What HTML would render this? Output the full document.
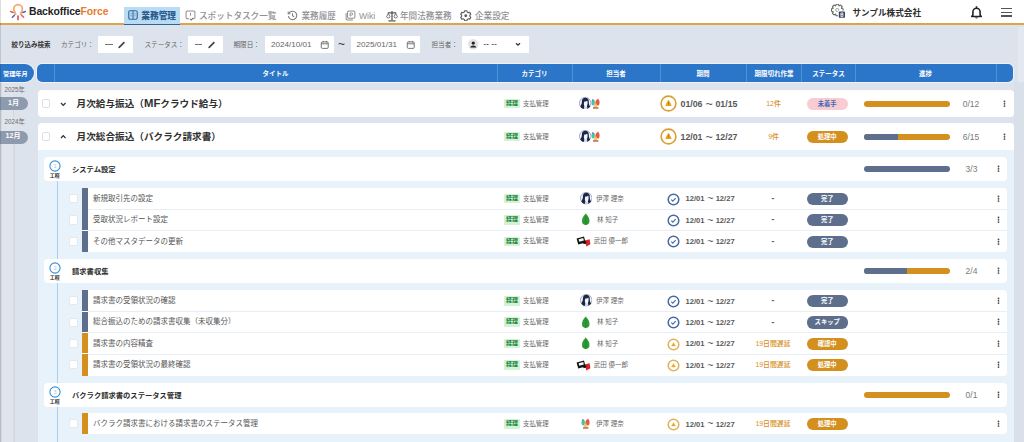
<!DOCTYPE html>
<html lang="ja"><head><meta charset="utf-8"><title>BackofficeForce</title><style>
*{box-sizing:border-box;margin:0;padding:0}
html,body{width:1024px;height:442px;overflow:hidden;background:#dde3ec;font-family:"Liberation Sans", "Noto Sans CJK JP", sans-serif;color:#333}
.a{position:absolute}
.t{position:absolute;white-space:nowrap;line-height:1;transform:translateY(-50%)}
.c{transform:translate(-50%,-50%)}
.b{font-weight:bold}
#hdr{left:0;top:0;width:1024px;height:25.3px;background:#fff;border-bottom:2px solid #dfa349}
.nav{font-size:8.6px;color:#8f8f94;font-weight:500}
.flt{font-size:6.6px;color:#666}
.inp{background:#fff;height:17px;top:36px;border-radius:1px}
.th{font-size:6.5px;color:#fff;font-weight:bold}
.sep{width:1px;top:63.500px;height:18.800px;background:#4f90db}
.card{background:#fff;border-radius:4px}
.cb{width:8.6px;height:8.6px;border:1px solid #dde0e5;border-radius:2px;background:#fff}
.cbs{width:9.2px;height:9.2px;border:1px solid #e6e8ec;border-radius:2px;background:#fff}
.badge{background:#d2f3d5;color:#23843a;font-size:6px;font-weight:bold;height:9.5px;width:16px;text-align:center;line-height:9.5px;border-radius:1px}
.cat{font-size:6.4px;color:#666}
.pill{width:41.2px;height:12.2px;border-radius:6.1px;color:#fff;font-size:6.3px;font-weight:bold;text-align:center;line-height:12.2px}
.bar{height:6px;border-radius:3px;overflow:hidden;background:#d4901f}
.bar i{display:block;height:6px;background:#5d6f8c}
.cnt{font-size:8.5px;color:#7a7a7a}
.nm{font-size:6.5px;color:#666}
.dt{font-size:7.6px;color:#585858;font-weight:bold}
.dt1{font-size:8.8px;color:#585858;font-weight:bold}
.dt1 u{text-decoration:none;font-size:12.5px;line-height:0;margin:0 2.6px 0 3px;position:relative;top:1.1px;font-weight:normal}
.dt u{text-decoration:none;font-size:10.5px;line-height:0;margin:0 2.3px 0 2.700px;position:relative;top:0.9px;font-weight:normal}
.late{font-size:6.9px;color:#d4901f;font-weight:500}
.dots{width:2px}
.dots i{display:block;width:1.7px;height:1.7px;border-radius:50%;background:#4a4a4a;margin-bottom:0.6px}
.ttl{font-size:9.65px;font-weight:bold;color:#303030}
.sttl{font-size:7.3px;font-weight:bold;color:#2b2b2b}
.tt{font-size:7.5px;color:#555}
.hl{height:1px;background:#e8eef5}
</style></head><body>
<div class="a" id="hdr"></div>
<svg class="a" style="left:9px;top:3px" width="18" height="18" viewBox="0 0 18 18">
<path d="M6.600 11.200C6.600 9.600 4.800 8.600 4.800 5.900A4.300 4.300 0 0 1 13.400 5.900C13.400 8.600 11.600 9.600 11.600 11.200" fill="none" stroke="#f4a56c" stroke-width="1.700" stroke-linecap="round"/>
<path d="M1.700 8.600L4.200 9.500" stroke="#e5604a" stroke-width="1.600" stroke-linecap="round"/>
<path d="M16.300 8.600L13.800 9.500" stroke="#4a6fc0" stroke-width="1.600" stroke-linecap="round"/>
<path d="M3.400 14.200L5.400 12.200" stroke="#4a6fc0" stroke-width="1.600" stroke-linecap="round"/>
<path d="M14.600 14.200L12.600 12.200" stroke="#e0607e" stroke-width="1.600" stroke-linecap="round"/>
<path d="M9 16.400L9 13" stroke="#dc5560" stroke-width="1.700" stroke-linecap="round"/>
</svg>
<div class="t b" id="logo" style="left:29px;top:12.3px;font-size:10.400px;color:#222;letter-spacing:-0.100px">Backoffice<span style="color:#ea7a2c">Force</span></div>
<div class="a" style="left:124.300px;top:7.300px;width:55.700px;height:17.300px;background:#b9dcf5;border-bottom:1.600px solid #34638f"></div>
<svg class="a" style="left:128px;top:10.2px" width="10" height="10" viewBox="0 0 12 12"><rect x="0.900" y="0.900" width="10.200" height="10.200" rx="1.700" fill="none" stroke="#3a6b9c" stroke-width="1.400"/><path d="M6 1V11" stroke="#3a6b9c" stroke-width="1.300"/><path d="M3 4.500h1.600M3 7h1.600M7.400 4.500H9M7.400 7H9" stroke="#3a6b9c" stroke-width="0.800"/></svg>
<div class="t nav" style="left:141.300px;top:15.700px;color:#2d5d8c;font-weight:900;font-size:8.700px">業務管理</div>
<svg class="a" style="left:185px;top:9.5px" width="11" height="11" viewBox="0 0 12 12"><path d="M4.5 9.5H2.3a1.1 1.1 0 0 1-1.1-1.1V2.3a1.1 1.1 0 0 1 1.1-1.1h7.4a1.1 1.1 0 0 1 1.1 1.1v6.1a1.1 1.1 0 0 1-1.1 1.1H9" fill="none" stroke="#8e8e8e" stroke-width="1.1"/><path d="M6 3v3.2" stroke="#8e8e8e" stroke-width="1.1"/><path d="M5.600 9.600l1.300 1.300 2.200-2.400" fill="none" stroke="#777" stroke-width="1.200"/></svg>
<div class="t nav" style="left:199px;top:15.7px">スポットタスク一覧</div>
<svg class="a" style="left:286.5px;top:9.5px" width="11" height="11" viewBox="0 0 12 12"><path d="M2.2 3.4A4.6 4.6 0 1 1 1.5 6.6" fill="none" stroke="#7d7d7d" stroke-width="1.2"/><path d="M1.3 1.6v2.4h2.4" fill="none" stroke="#7d7d7d" stroke-width="1.1"/><path d="M6 3.6v2.7l1.8 1" fill="none" stroke="#7d7d7d" stroke-width="1.1"/></svg>
<div class="t nav" style="left:301.5px;top:15.7px">業務履歴</div>
<svg class="a" style="left:344.5px;top:9.5px" width="11" height="11" viewBox="0 0 12 12"><rect x="2.8" y="1" width="8" height="8" rx="1.4" fill="none" stroke="#8e8e8e" stroke-width="1.1"/><path d="M1.2 3.4v5.8a1.6 1.6 0 0 0 1.6 1.6h5.8" fill="none" stroke="#8e8e8e" stroke-width="1.1"/><path d="M5.6 7V3.2h1.6a1.2 1.2 0 0 1 0 2.4H5.6" fill="none" stroke="#8e8e8e" stroke-width="1"/></svg>
<div class="t nav" style="left:359px;top:15.7px">Wiki</div>
<svg class="a" style="left:385.5px;top:10px" width="12" height="11.5" viewBox="0 0 12 11.500"><path d="M6 1v9M2.400 10.800h7.200M1.800 2.900h8.400" stroke="#5a5a5a" stroke-width="1.300" fill="none"/><path d="M0.600 6.800l1.700-3.600 1.700 3.600a1.800 1.800 0 0 1-3.400 0zM8 6.800l1.700-3.600 1.700 3.600a1.800 1.800 0 0 1-3.400 0z" fill="none" stroke="#666" stroke-width="0.900"/></svg>
<div class="t nav" style="left:400px;top:15.7px">年間法務業務</div>
<svg class="a" style="left:460.3px;top:9.8px" width="11.5" height="11.5" viewBox="0 0 12 12"><path d="M4.900 0.800h2.200l0.400 1.400 1.300 0.700 1.400-0.400 1.100 1.900-1 1v1.200l1 1-1.100 1.900-1.400-0.400-1.300 0.700-0.400 1.400H4.900l-0.400-1.400-1.300-0.700-1.400 0.400L0.700 7.600l1-1V5.400l-1-1 1.100-1.900 1.400 0.400 1.300-0.700z" fill="none" stroke="#5f5f5f" stroke-width="1.200" stroke-linejoin="round"/><circle cx="6" cy="6" r="1.500" fill="#5f5f5f"/></svg>
<div class="t nav" style="left:475px;top:15.7px">企業設定</div>
<svg class="a" style="left:830.6px;top:4.4px" width="15" height="15" viewBox="0 0 15 15"><path d="M5.13 0.22 L7.47 0.22 L7.89 1.79 L8.16 1.90 L9.56 1.08 L11.22 2.74 L10.40 4.14 L10.51 4.41 L12.08 4.83 L12.08 7.17 L10.51 7.59 L10.40 7.86 L11.22 9.26 L9.56 10.92 L8.16 10.10 L7.89 10.21 L7.47 11.78 L5.13 11.78 L4.71 10.21 L4.44 10.10 L3.04 10.92 L1.38 9.26 L2.20 7.86 L2.09 7.59 L0.52 7.17 L0.52 4.83 L2.09 4.41 L2.20 4.14 L1.38 2.74 L3.04 1.08 L4.44 1.90 L4.71 1.79z" fill="none" stroke="#666" stroke-width="1.100" stroke-linejoin="round"/><circle cx="6.3" cy="6.0" r="1.600" fill="none" stroke="#888" stroke-width="0.800"/><rect x="7" y="6.600" width="8" height="8.400" fill="#fff"/><rect x="7.800" y="7.400" width="6.200" height="6.400" rx="0.900" fill="#3d4460"/><path d="M9.900 9h2v3.600h-2zM9.900 10.600h2" fill="none" stroke="#fff" stroke-width="0.800"/></svg>
<div class="t b" style="left:852.500px;top:12.700px;font-size:8.600px;color:#2e2e2e">サンプル株式会社</div>
<svg class="a" style="left:969.8px;top:5px" width="13" height="15" viewBox="0 0 13 15"><path d="M6.500 1.300v1.200M2.900 10V6.800a3.600 3.600 0 0 1 7.200 0V10l1.200 1.500H1.700z" fill="none" stroke="#222" stroke-width="1.600" stroke-linejoin="round"/><path d="M5 12.400a1.600 1.600 0 0 0 3 0z" fill="#222"/></svg>
<div class="a" style="left:1000.5px;top:7.800px;width:11.5px;height:1.500px;background:#555"></div>
<div class="a" style="left:1000.5px;top:11.600px;width:11.5px;height:1.500px;background:#555"></div>
<div class="a" style="left:1000.5px;top:15.400px;width:11.5px;height:1.500px;background:#555"></div>
<div class="t b" style="left:11.5px;top:44.7px;font-size:6.5px;color:#333">絞り込み検索</div>
<div class="t flt" style="left:61px;top:44.7px">カテゴリ：</div>
<div class="a inp" style="left:98px;width:35px"></div>
<div class="a" style="left:105px;top:44.2px;width:7.5px;height:1px;background:#777"></div>
<svg class="a" style="left:117px;top:39.8px" width="9.5" height="9.5" viewBox="0 0 12 12"><path d="M1.600 10.400l0.400-1.900 6.600-6.600 1.500 1.500-6.600 6.600z" fill="#444"/></svg>
<div class="t flt" style="left:144.5px;top:44.7px">ステータス：</div>
<div class="a inp" style="left:187.5px;width:35px"></div>
<div class="a" style="left:194.5px;top:44.2px;width:7.5px;height:1px;background:#777"></div>
<svg class="a" style="left:206.5px;top:39.8px" width="9.5" height="9.5" viewBox="0 0 12 12"><path d="M1.600 10.400l0.400-1.900 6.600-6.600 1.500 1.500-6.600 6.600z" fill="#444"/></svg>
<div class="t flt" style="left:233.5px;top:44.7px">期限日：</div>
<div class="a inp" style="left:264.5px;width:69.5px"></div>
<div class="t" style="left:271px;top:44.7px;font-size:8.100px;color:#666">2024/10/01</div>
<svg class="a" style="left:320px;top:40px" width="9.5" height="9.5" viewBox="0 0 12 12"><rect x="1.6" y="2.4" width="8.8" height="8.2" rx="1.4" fill="none" stroke="#666" stroke-width="1.1"/><path d="M1.6 4.8h8.8M4 1.2v2M8 1.2v2" stroke="#666" stroke-width="1.1"/></svg>
<div class="t" style="left:338px;top:44.300000000000004px;font-size:12px;color:#333">~</div>
<div class="a inp" style="left:350.5px;width:69.5px"></div>
<div class="t" style="left:356.5px;top:44.7px;font-size:8.100px;color:#666">2025/01/31</div>
<svg class="a" style="left:405.5px;top:40px" width="9.5" height="9.5" viewBox="0 0 12 12"><rect x="1.6" y="2.4" width="8.8" height="8.2" rx="1.4" fill="none" stroke="#666" stroke-width="1.1"/><path d="M1.6 4.8h8.8M4 1.2v2M8 1.2v2" stroke="#666" stroke-width="1.1"/></svg>
<div class="t flt" style="left:431.5px;top:44.7px">担当者：</div>
<div class="a inp" style="left:461.5px;width:67.5px"></div>
<svg class="a" style="left:468px;top:39.3px" width="10.5" height="10.5" viewBox="0 0 12 12"><circle cx="6" cy="6" r="6" fill="#e3e3e3"/><circle cx="6" cy="4.7" r="1.9" fill="#222"/><path d="M2.4 9.8a3.7 3.2 0 0 1 7.2 0z" fill="#222"/></svg>
<div class="t" style="left:483.500px;top:44.2px;font-size:7.500px;color:#555;letter-spacing:0.300px;font-weight:bold">-- --</div>
<svg class="a" style="left:514.5px;top:42.3px" width="6" height="5" viewBox="0 0 6 5"><path d="M1 1.2l2 2 2-2" fill="none" stroke="#333" stroke-width="1.3"/></svg>
<div class="a" style="left:0;top:82px;width:14px;height:360px;background:#e0e5ed"></div>
<div class="a" style="left:13px;top:143px;width:1.5px;height:300px;background:#d3dae5"></div>
<div class="a" style="left:13.300px;top:110px;width:1px;height:8px;background:#cfd6e2"></div>
<div class="a" style="left:0;top:82px;width:1.5px;height:360px;background:#d3dae5"></div>
<div class="a" style="left:-10px;top:63.500px;width:43.500px;height:18.800px;background:#2b76c8;border-radius:9.400px;box-shadow:0 0 0 1px rgba(255,255,255,0.550)"></div>
<div class="t th" style="left:3px;top:73.700px;font-size:6.200px">管理年月</div>
<div class="t" style="left:4.600px;top:89.600px;font-size:6.300px;color:#6d6d6d">2025年</div>
<div class="a" style="left:-10px;top:97px;width:37.5px;height:13px;background:#8e9aae;border-radius:6.5px"></div>
<div class="t th" style="left:8px;top:103.800px;font-size:7.100px">1月</div>
<div class="t" style="left:4.600px;top:122.400px;font-size:6.300px;color:#6d6d6d">2024年</div>
<div class="a" style="left:-10px;top:130.5px;width:37.5px;height:13px;background:#8e9aae;border-radius:6.5px"></div>
<div class="t th" style="left:5.600px;top:137.300px;font-size:7.100px">12月</div>
<div class="a" style="left:37.200px;top:63.500px;width:976.300px;height:18.800px;background:#2b76c8;border-radius:5px;box-shadow:0 0 0 1px rgba(255,255,255,0.550)"></div>
<div class="a sep" style="left:54px"></div>
<div class="a sep" style="left:497px"></div>
<div class="a sep" style="left:572px"></div>
<div class="a sep" style="left:659.5px"></div>
<div class="a sep" style="left:745.5px"></div>
<div class="a sep" style="left:801px"></div>
<div class="a sep" style="left:854.7px"></div>
<div class="a sep" style="left:996px"></div>
<div class="t th c" style="left:275.5px;top:73.900px">タイトル</div>
<div class="t th c" style="left:534.5px;top:73.900px">カテゴリ</div>
<div class="t th c" style="left:616px;top:73.900px">担当者</div>
<div class="t th c" style="left:703px;top:73.900px">期間</div>
<div class="t th c" style="left:774px;top:73.900px">期限切れ作業</div>
<div class="t th c" style="left:828.5px;top:73.900px">ステータス</div>
<div class="t th c" style="left:925.5px;top:73.900px">進捗</div>
<div class="a card" style="left:37.5px;top:90px;width:976px;height:27px;border-radius:4px"></div>
<div class="a cb" style="left:41.700px;top:99.2px"></div>
<svg class="a" style="left:60.2px;top:101.7px" width="6.5" height="5" viewBox="0 0 6.500 5"><path d="M1 1l2.250 2.400L5.500 1" fill="none" stroke="#333" stroke-width="1.300"/></svg>
<div class="t ttl" style="left:76.600px;top:103.8px">月次給与振込（<span style="font-size:11.3px;line-height:0">MF</span>クラウド給与）</div>
<div class="a badge" style="left:504px;top:98.75px">経理</div>
<div class="t cat" style="left:523px;top:103.5px">支払管理</div>
<svg class="a" style="left:579.3px;top:97.0px" width="12.4" height="12.4" viewBox="0 0 12 12"><circle cx="6" cy="6" r="5.600" fill="#f4f5fa" stroke="#5a6a96" stroke-width="0.500"/><path d="M6.400 0.700C4 0.500 2.700 2.300 2.800 4.400 2.900 6.400 2 7.600 1.300 9.200 2 10.600 3.400 11.400 4.800 11.500L5.300 9C4.600 7.800 4.500 5.600 5.200 4.300 6.200 4.600 7.400 4.200 7.900 3.400 8.600 4.600 8.500 7 7.700 8.600L8 11.300C9.200 11 10.200 10.300 10.800 9.300 10 7.900 9.400 6.600 9.500 4.600 9.600 2.600 8.600 0.900 6.400 0.700z" fill="#1b2747"/><path d="M5.300 9l-0.500 2.500c0.800 0.200 2.400 0.200 3.200-0.200L7.700 8.600C7.100 9.300 5.900 9.500 5.300 9z" fill="#cfd5ec"/></svg>
<svg class="a" style="left:591.2px;top:97.55px" width="9.200000000000001" height="11.5" viewBox="0 0 9.200 11.500"><ellipse cx="2.200" cy="4.600" rx="1.700" ry="3" fill="#3fc4b2"/><ellipse cx="6.600" cy="4.500" rx="2" ry="3.100" fill="#e8583a"/><path d="M1.600 1.200l0.700 1.600M7.200 0.800l-0.400 1.600" stroke="#c0483a" stroke-width="0.900"/><path d="M3.400 5.500h2l0.800 3.500H2.800z" fill="#f1c873"/><path d="M4.400 3l0.900 3-1.700 0.400z" fill="#f0a048"/><path d="M2 9.200h5.400v1.500H2z" fill="#b8683c"/></svg>
<svg class="a" style="left:659.7px;top:94.7px" width="17" height="17" viewBox="0 0 17 17"><circle cx="8.500" cy="8.500" r="7.400" fill="#fff" stroke="#d9a030" stroke-width="1.600"/><path d="M8.500 5.300l2.700 5.200H5.800z" fill="#e8a520" stroke="#e8a520" stroke-width="1" stroke-linejoin="round"/><path d="M8.500 7v1.900M8.500 9.600v0.700" stroke="#9a6a10" stroke-width="0.800"/></svg>
<div class="t dt1" style="left:680.500px;top:103.7px">01/06<u>~</u>01/15</div>
<div class="t late c" style="left:773.500px;top:103.5px">12件</div>
<div class="a pill" style="left:806.600px;top:97.7px;background:#f9cbd2;color:#4468b4">未着手</div>
<div class="a bar" style="left:863.5px;top:100.5px;width:86.5px"></div>
<div class="t cnt c" style="left:971px;top:103.5px">0/12</div>
<svg class="a" style="left:1002.8px;top:99.7px" width="3" height="7.600" viewBox="0 0 3 7.600"><circle cx="1.500" cy="1.500" r="0.900" fill="#4a4a4a"/><circle cx="1.500" cy="3.800" r="0.900" fill="#4a4a4a"/><circle cx="1.500" cy="6.100" r="0.900" fill="#4a4a4a"/></svg>
<div class="a card" style="left:37.5px;top:123px;width:976px;height:27px;border-radius:4px 4px 0 0"></div>
<div class="a cb" style="left:41.700px;top:132.2px"></div>
<svg class="a" style="left:60.2px;top:134.0px" width="6.5" height="5" viewBox="0 0 6.500 5"><path d="M1 4l2.250-2.400L5.500 4" fill="none" stroke="#333" stroke-width="1.300"/></svg>
<div class="t ttl" style="left:76.600px;top:136.8px">月次総合振込（バクラク請求書）</div>
<div class="a badge" style="left:504px;top:131.75px">経理</div>
<div class="t cat" style="left:523px;top:136.5px">支払管理</div>
<svg class="a" style="left:579.3px;top:130.0px" width="12.4" height="12.4" viewBox="0 0 12 12"><circle cx="6" cy="6" r="5.600" fill="#f4f5fa" stroke="#5a6a96" stroke-width="0.500"/><path d="M6.400 0.700C4 0.500 2.700 2.300 2.800 4.400 2.900 6.400 2 7.600 1.300 9.200 2 10.600 3.400 11.400 4.800 11.500L5.300 9C4.600 7.800 4.500 5.600 5.200 4.300 6.200 4.600 7.400 4.200 7.900 3.400 8.600 4.600 8.500 7 7.700 8.600L8 11.300C9.200 11 10.200 10.300 10.800 9.300 10 7.900 9.400 6.600 9.500 4.600 9.600 2.600 8.600 0.900 6.400 0.700z" fill="#1b2747"/><path d="M5.300 9l-0.500 2.500c0.800 0.200 2.400 0.200 3.200-0.200L7.700 8.600C7.100 9.300 5.900 9.500 5.300 9z" fill="#cfd5ec"/></svg>
<svg class="a" style="left:591.2px;top:130.55px" width="9.200000000000001" height="11.5" viewBox="0 0 9.200 11.500"><ellipse cx="2.200" cy="4.600" rx="1.700" ry="3" fill="#3fc4b2"/><ellipse cx="6.600" cy="4.500" rx="2" ry="3.100" fill="#e8583a"/><path d="M1.600 1.200l0.700 1.600M7.200 0.800l-0.400 1.600" stroke="#c0483a" stroke-width="0.900"/><path d="M3.400 5.500h2l0.800 3.500H2.800z" fill="#f1c873"/><path d="M4.400 3l0.900 3-1.700 0.400z" fill="#f0a048"/><path d="M2 9.200h5.400v1.500H2z" fill="#b8683c"/></svg>
<svg class="a" style="left:659.7px;top:127.7px" width="17" height="17" viewBox="0 0 17 17"><circle cx="8.500" cy="8.500" r="7.400" fill="#fff" stroke="#d9a030" stroke-width="1.600"/><path d="M8.500 5.300l2.700 5.200H5.800z" fill="#e8a520" stroke="#e8a520" stroke-width="1" stroke-linejoin="round"/><path d="M8.500 7v1.900M8.500 9.600v0.700" stroke="#9a6a10" stroke-width="0.800"/></svg>
<div class="t dt1" style="left:680.500px;top:136.7px">12/01<u>~</u>12/27</div>
<div class="t late c" style="left:773.500px;top:136.5px">9件</div>
<div class="a pill" style="left:806.600px;top:130.7px;background:#d4901f;color:#fff">処理中</div>
<div class="a bar" style="left:863.5px;top:133.5px;width:86.5px"><i style="width:40.00%"></i></div>
<div class="t cnt c" style="left:971px;top:136.5px">6/15</div>
<svg class="a" style="left:1002.8px;top:132.7px" width="3" height="7.600" viewBox="0 0 3 7.600"><circle cx="1.500" cy="1.500" r="0.900" fill="#4a4a4a"/><circle cx="1.500" cy="3.800" r="0.900" fill="#4a4a4a"/><circle cx="1.500" cy="6.100" r="0.900" fill="#4a4a4a"/></svg>
<div class="a" style="left:37.500px;top:150px;width:976px;height:292px;background:#e7f2fb"></div>
<div class="a" style="left:57px;top:170px;width:1.200px;height:272px;background:#a9cfee"></div>
<div class="a card" style="left:43.500px;top:157px;width:963.500px;height:24px"></div>
<svg class="a" style="left:48.7px;top:159.8px" width="12" height="12" viewBox="0 0 12 12"><circle cx="6" cy="6" r="5.100" fill="#fff" stroke="#3b8fd6" stroke-width="1.100"/><text x="6" y="7.900" font-size="5.500" text-anchor="middle" fill="#9cc4ea" font-family='"Liberation Sans", "Noto Sans CJK JP", sans-serif'>1</text></svg>
<div class="t b c" style="left:54.700px;top:174.7px;font-size:5px;color:#2b2b2b">工程</div>
<div class="t sttl" style="left:72px;top:169.7px">システム設定</div>
<div class="a bar" style="left:863.5px;top:165.7px;width:86.5px"><i style="width:100.00%"></i></div>
<div class="t cnt c" style="left:971.500px;top:168.7px">3/3</div>
<svg class="a" style="left:996.5px;top:164.89999999999998px" width="3" height="7.600" viewBox="0 0 3 7.600"><circle cx="1.500" cy="1.500" r="0.900" fill="#4a4a4a"/><circle cx="1.500" cy="3.800" r="0.900" fill="#4a4a4a"/><circle cx="1.500" cy="6.100" r="0.900" fill="#4a4a4a"/></svg>
<div class="a" style="left:82px;top:188px;width:925px;height:63.989999999999995px;background:#fff;border-radius:0 4px 4px 0"></div>
<div class="a" style="left:82px;top:188.0px;width:5.900px;height:20.63px;background:#5d6f8c"></div>
<div class="a cbs" style="left:69.200px;top:194.065px"></div>
<div class="t tt" style="left:93px;top:198.86499999999998px">新規取引先の設定</div>
<div class="a badge" style="left:504px;top:193.915px">経理</div>
<div class="t cat" style="left:523px;top:198.665px">支払管理</div>
<svg class="a" style="left:579.5px;top:192.165px" width="12.4" height="12.4" viewBox="0 0 12 12"><circle cx="6" cy="6" r="5.600" fill="#f4f5fa" stroke="#5a6a96" stroke-width="0.500"/><path d="M6.400 0.700C4 0.500 2.700 2.300 2.800 4.400 2.900 6.400 2 7.600 1.300 9.200 2 10.600 3.400 11.400 4.800 11.500L5.300 9C4.600 7.800 4.500 5.600 5.200 4.300 6.200 4.600 7.400 4.200 7.900 3.400 8.600 4.600 8.500 7 7.700 8.600L8 11.300C9.200 11 10.200 10.300 10.800 9.300 10 7.900 9.400 6.600 9.500 4.600 9.600 2.600 8.600 0.900 6.400 0.700z" fill="#1b2747"/><path d="M5.300 9l-0.500 2.500c0.800 0.200 2.400 0.200 3.200-0.200L7.700 8.600C7.100 9.300 5.900 9.500 5.300 9z" fill="#cfd5ec"/></svg>
<div class="t nm" style="left:596px;top:198.665px">伊澤 理奈</div>
<svg class="a" style="left:667.1px;top:192.665px" width="13" height="13" viewBox="0 0 13 13"><circle cx="6.500" cy="6.500" r="5.300" fill="#fff" stroke="#4569a4" stroke-width="1.500"/><path d="M4.300 6.700l1.500 1.500 2.900-3" fill="none" stroke="#4a6fa8" stroke-width="1.200"/></svg>
<div class="t dt" style="left:685.500px;top:199.465px">12/01<u>~</u>12/27</div>
<div class="t c b" style="left:772.800px;top:198.065px;font-size:8.500px;color:#555">-</div>
<div class="a pill" style="left:806.600px;top:192.86499999999998px;background:#5d6f8c;color:#fff">完了</div>
<svg class="a" style="left:996.5px;top:194.86499999999998px" width="3" height="7.600" viewBox="0 0 3 7.600"><circle cx="1.500" cy="1.500" r="0.900" fill="#4a4a4a"/><circle cx="1.500" cy="3.800" r="0.900" fill="#4a4a4a"/><circle cx="1.500" cy="6.100" r="0.900" fill="#4a4a4a"/></svg>
<div class="a" style="left:82px;top:209.32999999999998px;width:5.900px;height:20.63px;background:#5d6f8c"></div>
<div class="a hl" style="left:87.900px;top:208.82999999999998px;width:919px"></div>
<div class="a cbs" style="left:69.200px;top:215.39499999999998px"></div>
<div class="t tt" style="left:93px;top:220.19499999999996px">受取状況レポート設定</div>
<div class="a badge" style="left:504px;top:215.24499999999998px">経理</div>
<div class="t cat" style="left:523px;top:219.99499999999998px">支払管理</div>
<svg class="a" style="left:581px;top:213.49499999999998px" width="9.5" height="13" viewBox="0 0 10 13"><path d="M5 0.300C7.500 3 9.600 6 8.800 9.500 8.300 11.300 6.800 12.200 5 12.400 3.200 12.200 1.700 11.300 1.200 9.500 0.400 6 2.500 3 5 0.300z" fill="#2c9a35"/><path d="M5 3v9.400" stroke="#1e7a28" stroke-width="0.600"/></svg>
<div class="t nm" style="left:597px;top:219.99499999999998px">林 知子</div>
<svg class="a" style="left:667.1px;top:213.99499999999998px" width="13" height="13" viewBox="0 0 13 13"><circle cx="6.500" cy="6.500" r="5.300" fill="#fff" stroke="#4569a4" stroke-width="1.500"/><path d="M4.300 6.700l1.500 1.500 2.900-3" fill="none" stroke="#4a6fa8" stroke-width="1.200"/></svg>
<div class="t dt" style="left:685.500px;top:220.795px">12/01<u>~</u>12/27</div>
<div class="t c b" style="left:772.800px;top:219.39499999999998px;font-size:8.500px;color:#555">-</div>
<div class="a pill" style="left:806.600px;top:214.19499999999996px;background:#5d6f8c;color:#fff">完了</div>
<svg class="a" style="left:996.5px;top:216.19499999999996px" width="3" height="7.600" viewBox="0 0 3 7.600"><circle cx="1.500" cy="1.500" r="0.900" fill="#4a4a4a"/><circle cx="1.500" cy="3.800" r="0.900" fill="#4a4a4a"/><circle cx="1.500" cy="6.100" r="0.900" fill="#4a4a4a"/></svg>
<div class="a" style="left:82px;top:230.66px;width:5.900px;height:21.33px;background:#5d6f8c"></div>
<div class="a hl" style="left:87.900px;top:230.16px;width:919px"></div>
<div class="a cbs" style="left:69.200px;top:236.725px"></div>
<div class="t tt" style="left:93px;top:241.52499999999998px">その他マスタデータの更新</div>
<div class="a badge" style="left:504px;top:236.575px">経理</div>
<div class="t cat" style="left:523px;top:241.325px">支払管理</div>
<svg class="a" style="left:576px;top:235.325px" width="15" height="12" viewBox="0 0 15 12"><path d="M0.600 3.500L8 1.500 9.600 7.500 2.200 9.500z" fill="#151515"/><path d="M2.600 4.300L7.200 3.100 7.900 5.600 3.300 6.800z" fill="#f4f4f4"/><path d="M8.600 5.500l5-1.300 0.800 5-4 2.200z" fill="#d8232a"/><circle cx="8.600" cy="7.400" r="1.700" fill="#151515"/></svg>
<div class="t nm" style="left:593.800px;top:241.325px">武田 優一郎</div>
<svg class="a" style="left:667.1px;top:235.325px" width="13" height="13" viewBox="0 0 13 13"><circle cx="6.500" cy="6.500" r="5.300" fill="#fff" stroke="#4569a4" stroke-width="1.500"/><path d="M4.300 6.700l1.500 1.500 2.900-3" fill="none" stroke="#4a6fa8" stroke-width="1.200"/></svg>
<div class="t dt" style="left:685.500px;top:242.125px">12/01<u>~</u>12/27</div>
<div class="t c b" style="left:772.800px;top:240.725px;font-size:8.500px;color:#555">-</div>
<div class="a pill" style="left:806.600px;top:235.52499999999998px;background:#5d6f8c;color:#fff">完了</div>
<svg class="a" style="left:996.5px;top:237.52499999999998px" width="3" height="7.600" viewBox="0 0 3 7.600"><circle cx="1.500" cy="1.500" r="0.900" fill="#4a4a4a"/><circle cx="1.500" cy="3.800" r="0.900" fill="#4a4a4a"/><circle cx="1.500" cy="6.100" r="0.900" fill="#4a4a4a"/></svg>
<div class="a card" style="left:43.500px;top:259px;width:963.500px;height:24px"></div>
<svg class="a" style="left:48.7px;top:261.8px" width="12" height="12" viewBox="0 0 12 12"><circle cx="6" cy="6" r="5.100" fill="#fff" stroke="#3b8fd6" stroke-width="1.100"/><text x="6" y="7.900" font-size="5.500" text-anchor="middle" fill="#9cc4ea" font-family='"Liberation Sans", "Noto Sans CJK JP", sans-serif'>2</text></svg>
<div class="t b c" style="left:54.700px;top:276.7px;font-size:5px;color:#2b2b2b">工程</div>
<div class="t sttl" style="left:72px;top:271.7px">請求書収集</div>
<div class="a bar" style="left:863.5px;top:267.7px;width:86.5px"><i style="width:50.00%"></i></div>
<div class="t cnt c" style="left:971.500px;top:270.7px">2/4</div>
<svg class="a" style="left:996.5px;top:266.9px" width="3" height="7.600" viewBox="0 0 3 7.600"><circle cx="1.500" cy="1.500" r="0.900" fill="#4a4a4a"/><circle cx="1.500" cy="3.800" r="0.900" fill="#4a4a4a"/><circle cx="1.500" cy="6.100" r="0.900" fill="#4a4a4a"/></svg>
<div class="a" style="left:82px;top:290.2px;width:925px;height:85.32px;background:#fff;border-radius:0 4px 4px 0"></div>
<div class="a" style="left:82px;top:290.2px;width:5.900px;height:20.63px;background:#5d6f8c"></div>
<div class="a cbs" style="left:69.200px;top:296.265px"></div>
<div class="t tt" style="left:93px;top:301.065px">請求書の受領状況の確認</div>
<div class="a badge" style="left:504px;top:296.115px">経理</div>
<div class="t cat" style="left:523px;top:300.865px">支払管理</div>
<svg class="a" style="left:579.5px;top:294.365px" width="12.4" height="12.4" viewBox="0 0 12 12"><circle cx="6" cy="6" r="5.600" fill="#f4f5fa" stroke="#5a6a96" stroke-width="0.500"/><path d="M6.400 0.700C4 0.500 2.700 2.300 2.800 4.400 2.900 6.400 2 7.600 1.300 9.200 2 10.600 3.400 11.400 4.800 11.500L5.300 9C4.600 7.800 4.500 5.600 5.200 4.300 6.200 4.600 7.400 4.200 7.900 3.400 8.600 4.600 8.500 7 7.700 8.600L8 11.300C9.200 11 10.200 10.300 10.800 9.300 10 7.900 9.400 6.600 9.500 4.600 9.600 2.600 8.600 0.900 6.400 0.700z" fill="#1b2747"/><path d="M5.300 9l-0.500 2.500c0.800 0.200 2.400 0.200 3.200-0.200L7.700 8.600C7.100 9.300 5.900 9.500 5.300 9z" fill="#cfd5ec"/></svg>
<div class="t nm" style="left:596px;top:300.865px">伊澤 理奈</div>
<svg class="a" style="left:667.1px;top:294.865px" width="13" height="13" viewBox="0 0 13 13"><circle cx="6.500" cy="6.500" r="5.300" fill="#fff" stroke="#4569a4" stroke-width="1.500"/><path d="M4.300 6.700l1.500 1.500 2.900-3" fill="none" stroke="#4a6fa8" stroke-width="1.200"/></svg>
<div class="t dt" style="left:685.500px;top:301.665px">12/01<u>~</u>12/27</div>
<div class="t c b" style="left:772.800px;top:300.265px;font-size:8.500px;color:#555">-</div>
<div class="a pill" style="left:806.600px;top:295.065px;background:#5d6f8c;color:#fff">完了</div>
<svg class="a" style="left:996.5px;top:297.065px" width="3" height="7.600" viewBox="0 0 3 7.600"><circle cx="1.500" cy="1.500" r="0.900" fill="#4a4a4a"/><circle cx="1.500" cy="3.800" r="0.900" fill="#4a4a4a"/><circle cx="1.500" cy="6.100" r="0.900" fill="#4a4a4a"/></svg>
<div class="a" style="left:82px;top:311.53px;width:5.900px;height:20.63px;background:#5d6f8c"></div>
<div class="a hl" style="left:87.900px;top:311.03px;width:919px"></div>
<div class="a cbs" style="left:69.200px;top:317.59499999999997px"></div>
<div class="t tt" style="left:93px;top:322.395px">総合振込のための請求書収集（未収集分）</div>
<div class="a badge" style="left:504px;top:317.445px">経理</div>
<div class="t cat" style="left:523px;top:322.195px">支払管理</div>
<svg class="a" style="left:581px;top:315.695px" width="9.5" height="13" viewBox="0 0 10 13"><path d="M5 0.300C7.500 3 9.600 6 8.800 9.500 8.300 11.300 6.800 12.200 5 12.400 3.200 12.200 1.700 11.300 1.200 9.500 0.400 6 2.500 3 5 0.300z" fill="#2c9a35"/><path d="M5 3v9.400" stroke="#1e7a28" stroke-width="0.600"/></svg>
<div class="t nm" style="left:597px;top:322.195px">林 知子</div>
<svg class="a" style="left:667.1px;top:316.195px" width="13" height="13" viewBox="0 0 13 13"><circle cx="6.500" cy="6.500" r="5.300" fill="#fff" stroke="#4569a4" stroke-width="1.500"/><path d="M4.300 6.700l1.500 1.500 2.900-3" fill="none" stroke="#4a6fa8" stroke-width="1.200"/></svg>
<div class="t dt" style="left:685.500px;top:322.995px">12/01<u>~</u>12/27</div>
<div class="t c b" style="left:772.800px;top:321.59499999999997px;font-size:8.500px;color:#555">-</div>
<div class="a pill" style="left:806.600px;top:316.395px;background:#5d6f8c;color:#fff">スキップ</div>
<svg class="a" style="left:996.5px;top:318.395px" width="3" height="7.600" viewBox="0 0 3 7.600"><circle cx="1.500" cy="1.500" r="0.900" fill="#4a4a4a"/><circle cx="1.500" cy="3.800" r="0.900" fill="#4a4a4a"/><circle cx="1.500" cy="6.100" r="0.900" fill="#4a4a4a"/></svg>
<div class="a" style="left:82px;top:332.86px;width:5.900px;height:20.63px;background:#d4901f"></div>
<div class="a hl" style="left:87.900px;top:332.36px;width:919px"></div>
<div class="a cbs" style="left:69.200px;top:338.925px"></div>
<div class="t tt" style="left:93px;top:343.725px">請求書の内容精査</div>
<div class="a badge" style="left:504px;top:338.77500000000003px">経理</div>
<div class="t cat" style="left:523px;top:343.52500000000003px">支払管理</div>
<svg class="a" style="left:581px;top:337.02500000000003px" width="9.5" height="13" viewBox="0 0 10 13"><path d="M5 0.300C7.500 3 9.600 6 8.800 9.500 8.300 11.300 6.800 12.200 5 12.400 3.200 12.200 1.700 11.300 1.200 9.500 0.400 6 2.500 3 5 0.300z" fill="#2c9a35"/><path d="M5 3v9.400" stroke="#1e7a28" stroke-width="0.600"/></svg>
<div class="t nm" style="left:597px;top:343.52500000000003px">林 知子</div>
<svg class="a" style="left:667.1px;top:337.52500000000003px" width="13" height="13" viewBox="0 0 13 13"><circle cx="6.500" cy="6.500" r="5.300" fill="#fff" stroke="#e0b258" stroke-width="1.500"/><path d="M6.500 4.700l1.900 3.200H4.600z" fill="#e6a93a" stroke="#e6a93a" stroke-width="0.600" stroke-linejoin="round"/></svg>
<div class="t dt" style="left:685.500px;top:344.32500000000005px">12/01<u>~</u>12/27</div>
<div class="t late c" style="left:773px;top:343.52500000000003px">19日間遅延</div>
<div class="a pill" style="left:806.600px;top:337.725px;background:#d4901f;color:#fff">確認中</div>
<svg class="a" style="left:996.5px;top:339.725px" width="3" height="7.600" viewBox="0 0 3 7.600"><circle cx="1.500" cy="1.500" r="0.900" fill="#4a4a4a"/><circle cx="1.500" cy="3.800" r="0.900" fill="#4a4a4a"/><circle cx="1.500" cy="6.100" r="0.900" fill="#4a4a4a"/></svg>
<div class="a" style="left:82px;top:354.19px;width:5.900px;height:21.33px;background:#d4901f"></div>
<div class="a hl" style="left:87.900px;top:353.69px;width:919px"></div>
<div class="a cbs" style="left:69.200px;top:360.255px"></div>
<div class="t tt" style="left:93px;top:365.055px">請求書の受領状況の最終確認</div>
<div class="a badge" style="left:504px;top:360.105px">経理</div>
<div class="t cat" style="left:523px;top:364.855px">支払管理</div>
<svg class="a" style="left:576px;top:358.855px" width="15" height="12" viewBox="0 0 15 12"><path d="M0.600 3.500L8 1.500 9.600 7.500 2.200 9.500z" fill="#151515"/><path d="M2.600 4.300L7.200 3.100 7.900 5.600 3.300 6.800z" fill="#f4f4f4"/><path d="M8.600 5.500l5-1.300 0.800 5-4 2.200z" fill="#d8232a"/><circle cx="8.600" cy="7.400" r="1.700" fill="#151515"/></svg>
<div class="t nm" style="left:593.800px;top:364.855px">武田 優一郎</div>
<svg class="a" style="left:667.1px;top:358.855px" width="13" height="13" viewBox="0 0 13 13"><circle cx="6.500" cy="6.500" r="5.300" fill="#fff" stroke="#e0b258" stroke-width="1.500"/><path d="M6.500 4.700l1.900 3.200H4.600z" fill="#e6a93a" stroke="#e6a93a" stroke-width="0.600" stroke-linejoin="round"/></svg>
<div class="t dt" style="left:685.500px;top:365.65500000000003px">12/01<u>~</u>12/27</div>
<div class="t late c" style="left:773px;top:364.855px">19日間遅延</div>
<div class="a pill" style="left:806.600px;top:359.055px;background:#d4901f;color:#fff">処理中</div>
<svg class="a" style="left:996.5px;top:361.055px" width="3" height="7.600" viewBox="0 0 3 7.600"><circle cx="1.500" cy="1.500" r="0.900" fill="#4a4a4a"/><circle cx="1.500" cy="3.800" r="0.900" fill="#4a4a4a"/><circle cx="1.500" cy="6.100" r="0.900" fill="#4a4a4a"/></svg>
<div class="a card" style="left:43.500px;top:383px;width:963.500px;height:24px"></div>
<svg class="a" style="left:48.7px;top:385.8px" width="12" height="12" viewBox="0 0 12 12"><circle cx="6" cy="6" r="5.100" fill="#fff" stroke="#3b8fd6" stroke-width="1.100"/><text x="6" y="7.900" font-size="5.500" text-anchor="middle" fill="#9cc4ea" font-family='"Liberation Sans", "Noto Sans CJK JP", sans-serif'>3</text></svg>
<div class="t b c" style="left:54.700px;top:400.7px;font-size:5px;color:#2b2b2b">工程</div>
<div class="t sttl" style="left:72px;top:395.7px">バクラク請求書のステータス管理</div>
<div class="a bar" style="left:863.5px;top:391.7px;width:86.5px"></div>
<div class="t cnt c" style="left:971.500px;top:394.7px">0/1</div>
<svg class="a" style="left:996.5px;top:390.9px" width="3" height="7.600" viewBox="0 0 3 7.600"><circle cx="1.500" cy="1.500" r="0.900" fill="#4a4a4a"/><circle cx="1.500" cy="3.800" r="0.900" fill="#4a4a4a"/><circle cx="1.500" cy="6.100" r="0.900" fill="#4a4a4a"/></svg>
<div class="a" style="left:82px;top:413.1px;width:925px;height:21.33px;background:#fff;border-radius:0 4px 4px 0"></div>
<div class="a" style="left:82px;top:413.1px;width:5.900px;height:21.33px;background:#d4901f"></div>
<div class="a cbs" style="left:69.200px;top:419.165px"></div>
<div class="t tt" style="left:93px;top:423.96500000000003px">バクラク請求書における請求書のステータス管理</div>
<div class="a badge" style="left:504px;top:419.01500000000004px">経理</div>
<div class="t cat" style="left:523px;top:423.76500000000004px">支払管理</div>
<svg class="a" style="left:580.5px;top:417.81500000000005px" width="9.200000000000001" height="11.5" viewBox="0 0 9.200 11.500"><ellipse cx="2.200" cy="4.600" rx="1.700" ry="3" fill="#3fc4b2"/><ellipse cx="6.600" cy="4.500" rx="2" ry="3.100" fill="#e8583a"/><path d="M1.600 1.200l0.700 1.600M7.200 0.800l-0.400 1.600" stroke="#c0483a" stroke-width="0.900"/><path d="M3.400 5.500h2l0.800 3.500H2.800z" fill="#f1c873"/><path d="M4.400 3l0.900 3-1.700 0.400z" fill="#f0a048"/><path d="M2 9.200h5.400v1.500H2z" fill="#b8683c"/></svg>
<div class="t nm" style="left:596px;top:423.76500000000004px">伊澤 理奈</div>
<svg class="a" style="left:667.1px;top:417.76500000000004px" width="13" height="13" viewBox="0 0 13 13"><circle cx="6.500" cy="6.500" r="5.300" fill="#fff" stroke="#e0b258" stroke-width="1.500"/><path d="M6.500 4.700l1.900 3.200H4.600z" fill="#e6a93a" stroke="#e6a93a" stroke-width="0.600" stroke-linejoin="round"/></svg>
<div class="t dt" style="left:685.500px;top:424.56500000000005px">12/01<u>~</u>12/27</div>
<div class="t late c" style="left:773px;top:423.76500000000004px">19日間遅延</div>
<div class="a pill" style="left:806.600px;top:417.96500000000003px;background:#d4901f;color:#fff">処理中</div>
<svg class="a" style="left:996.5px;top:419.96500000000003px" width="3" height="7.600" viewBox="0 0 3 7.600"><circle cx="1.500" cy="1.500" r="0.900" fill="#4a4a4a"/><circle cx="1.500" cy="3.800" r="0.900" fill="#4a4a4a"/><circle cx="1.500" cy="6.100" r="0.900" fill="#4a4a4a"/></svg>
<div class="a" style="left:1017.500px;top:27.300px;width:6.500px;height:415px;background:#e4e8f0"></div>
<div class="a" style="left:0;top:0;width:1px;height:442px;background:rgba(0,0,0,0.13)"></div>
<div class="a" style="left:1013.500px;top:82px;width:10.500px;height:360px;background:#dae0ea"></div>
</body></html>
